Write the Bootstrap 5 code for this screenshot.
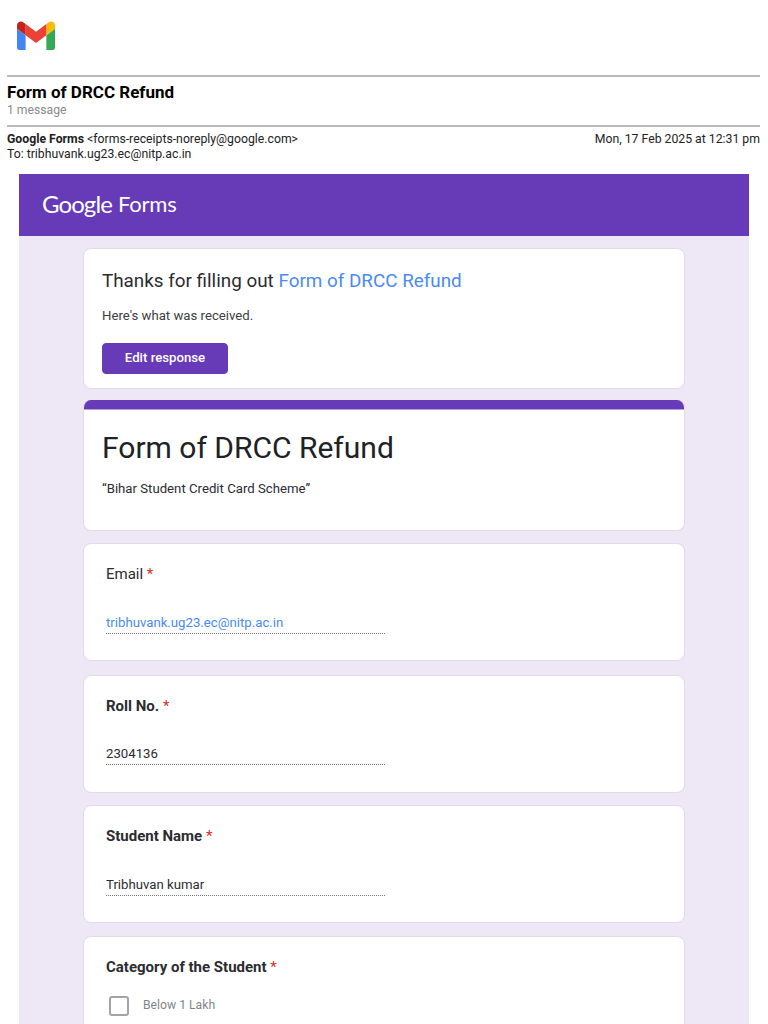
<!DOCTYPE html>
<html lang="en">
<head>
<meta charset="utf-8">
<title>Form of DRCC Refund</title>
<link href="https://cdn.jsdelivr.net/npm/bootstrap@5.3.0/dist/css/bootstrap.min.css" rel="stylesheet">
<style>
html, body { height: 1024px; overflow: hidden; }
body { font-family: Roboto, "Liberation Sans", sans-serif; color: #000; background: #fff; padding: 0 8px 0 7px; }
.mail-logo { height: 75px; padding: 21px 0 0 9.5px; }
.mail-logo svg { display: block; width: 38px; height: 29.5px; }
.mail-rule { height: 2px; background: #bababa; }
.subject { font-size: 17px; font-weight: 700; line-height: 20px; padding-top: 5px; }
.msg-count { font-size: 12.2px; line-height: 14px; color: #8a8a8a; padding: 1px 0 8px; }
.mail-meta { font-size: 12.25px; line-height: 15px; color: #222; padding-top: 5px; }
.form-wrap { margin: 12px 11px 0 12px; }
.forms-head { height: 62px; background: #673ab7; color: #fff; padding-left: 23px; padding-bottom: 3px; }
.brand-google { font-family: Lato, sans-serif; font-size: 24px; letter-spacing: -.9px; }
.brand-forms { font-family: Lato, sans-serif; font-size: 22px; font-weight: 400; letter-spacing: -.2px; margin-left: 6px; }
.forms-body { background: #ede7f6; padding: 12px 64px 0; height: 800px; }
.sheet { background: #fff; border: 1px solid #dfdce6; border-radius: 8px; margin-bottom: 12px; }
.sheet-intro { height: 141px; padding: 18px 18px 0; margin-bottom: 11px; }
.intro-title { font-size: 18.85px; line-height: 28px; color: #2b2c2f; }
.form-link { color: #4a8af4; text-decoration: none; }
.intro-note { font-size: 13.2px; line-height: 20px; color: #3c4043; margin-top: 11px; }
.edit-btn { display: block; background: #673ab7; color: #fff; font-size: 13.2px; font-weight: 500; width: 126px; height: 31px; padding: 0; line-height: 27px; border-radius: 4px; margin-top: 17px; border-color: #673ab7; }
.sheet-title { height: 131px; border-top: 0; overflow: hidden; }
.title-bar { height: 10px; background: #673ab7; border-bottom: 1px solid #b39ddb; margin: 0 -1px; }
.title-main { font-size: 30px; line-height: 40px; color: #202124; margin: 18px 18px 0; font-weight: 400; }
.title-sub { font-size: 13.2px; line-height: 20px; color: #2b2c2f; margin: 11px 18px 0; }
.sheet-field { height: 118px; padding: 19px 22px 0; margin-bottom: 13px; }
.sheet-email { margin-bottom: 14px; }
.sheet-roll { margin-bottom: 12px; }
.field-label { font-size: 15px; line-height: 22px; color: #2b2c2f; }
.req { color: #d93025; }
.field-answer { font-size: 13.2px; line-height: 20px; color: #2b2c2f; width: 279px; border-bottom: 1px dotted #70757a; margin-top: 28px; height: 21px; }
.answer-roll { margin-top: 27px; }
.answer-link { color: #4a8af4; }
.option-row { margin-top: 18px; padding-left: 3px; column-gap: 14px; }
.check-box { width: 20px; height: 20px; border: 2px solid #a0a5aa; border-radius: 3px; }
.option-text { font-size: 12.2px; line-height: 18px; color: #80868b; }
</style>
</head>
<body>
<div class="mail-logo">
<svg viewBox="52 42 88 66" role="img" aria-label="Gmail">
<path fill="#4285f4" d="M58 108h14V74L52 59v43c0 3.32 2.69 6 6 6"/>
<path fill="#34a853" d="M120 108h14c3.32 0 6-2.69 6-6V59l-20 15"/>
<path fill="#fbbc04" d="M120 48v26l20-15v-8c0-7.42-8.47-11.65-14.4-7.2"/>
<path fill="#ea4335" d="M72 74V48l24 18 24-18v26L96 92"/>
<path fill="#c5221f" d="M52 51v8l20 15V48l-5.6-4.2c-5.94-4.45-14.4-.22-14.4 7.2"/>
</svg>
</div>
<div class="mail-rule"></div>
<div class="subject">Form of DRCC Refund</div>
<div class="msg-count">1 message</div>
<div class="mail-rule"></div>
<div class="mail-meta d-flex justify-content-between">
<div><strong>Google Forms</strong> &lt;forms-receipts-noreply@google.com&gt;<br>To: tribhuvank.ug23.ec@nitp.ac.in</div>
<div>Mon, 17 Feb 2025 at 12:31 pm</div>
</div>
<div class="form-wrap">
<div class="forms-head d-flex align-items-center"><span class="brand-google">Google</span><span class="brand-forms">Forms</span></div>
<div class="forms-body">
<div class="sheet sheet-intro">
<div class="intro-title">Thanks for filling out <a class="form-link" href="#">Form of DRCC Refund</a></div>
<div class="intro-note">Here's what was received.</div>
<a class="btn edit-btn" href="#">Edit response</a>
</div>
<div class="sheet sheet-title">
<div class="title-bar"></div>
<h1 class="title-main">Form of DRCC Refund</h1>
<div class="title-sub">“Bihar Student Credit Card Scheme”</div>
</div>
<div class="sheet sheet-field sheet-email">
<div class="field-label">Email <span class="req">*</span></div>
<div class="field-answer answer-link">tribhuvank.ug23.ec@nitp.ac.in</div>
</div>
<div class="sheet sheet-field sheet-roll">
<div class="field-label fw-bold">Roll No. <span class="req fw-normal">*</span></div>
<div class="field-answer answer-roll">2304136</div>
</div>
<div class="sheet sheet-field">
<div class="field-label fw-bold">Student Name <span class="req fw-normal">*</span></div>
<div class="field-answer">Tribhuvan kumar</div>
</div>
<div class="sheet sheet-field">
<div class="field-label fw-bold">Category of the Student <span class="req fw-normal">*</span></div>
<div class="option-row d-flex">
<div class="check-box"></div>
<div class="option-text">Below 1 Lakh</div>
</div>
</div>
</div>
</div>
</body>
</html>
